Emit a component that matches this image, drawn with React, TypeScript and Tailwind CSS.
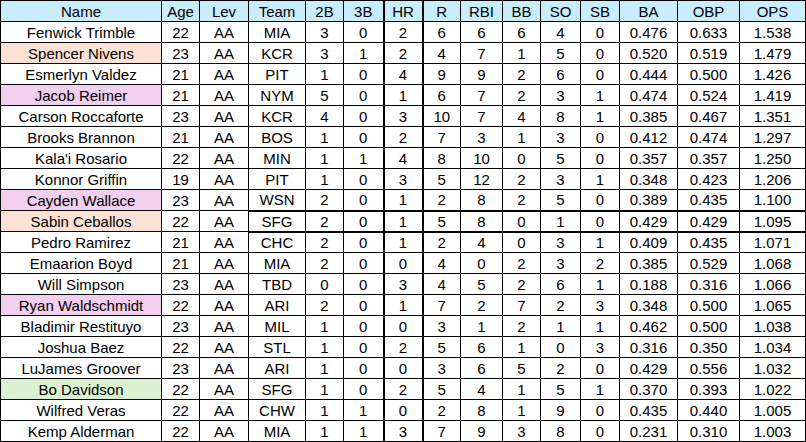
import React from "react";

type Row = [string, string, string, string, string, string, string, string, string, string, string, string, string, string, string, string];

const headers = ["Name", "Age", "Lev", "Team", "2B", "3B", "HR", "R", "RBI", "BB", "SO", "SB", "BA", "OBP", "OPS"];
const widths = [161, 38, 49, 57, 38, 40, 39, 38, 42, 38, 40, 39, 58, 62, 66];

const rows: Row[] = [
  ["Fenwick Trimble", "22", "AA", "MIA", "3", "0", "2", "6", "6", "6", "4", "0", "0.476", "0.633", "1.538", ""],
  ["Spencer Nivens", "23", "AA", "KCR", "3", "1", "2", "4", "7", "1", "5", "0", "0.520", "0.519", "1.479", "o"],
  ["Esmerlyn Valdez", "21", "AA", "PIT", "1", "0", "4", "9", "9", "2", "6", "0", "0.444", "0.500", "1.426", ""],
  ["Jacob Reimer", "21", "AA", "NYM", "5", "0", "1", "6", "7", "2", "3", "1", "0.474", "0.524", "1.419", "p"],
  ["Carson Roccaforte", "23", "AA", "KCR", "4", "0", "3", "10", "7", "4", "8", "1", "0.385", "0.467", "1.351", ""],
  ["Brooks Brannon", "21", "AA", "BOS", "1", "0", "2", "7", "3", "1", "3", "0", "0.412", "0.474", "1.297", ""],
  ["Kala'i Rosario", "22", "AA", "MIN", "1", "1", "4", "8", "10", "0", "5", "0", "0.357", "0.357", "1.250", ""],
  ["Konnor Griffin", "19", "AA", "PIT", "1", "0", "3", "5", "12", "2", "3", "1", "0.348", "0.423", "1.206", ""],
  ["Cayden Wallace", "23", "AA", "WSN", "2", "0", "1", "2", "8", "2", "5", "0", "0.389", "0.435", "1.100", "p"],
  ["Sabin Ceballos", "22", "AA", "SFG", "2", "0", "1", "5", "8", "0", "1", "0", "0.429", "0.429", "1.095", "o"],
  ["Pedro Ramirez", "21", "AA", "CHC", "2", "0", "1", "2", "4", "0", "3", "1", "0.409", "0.435", "1.071", ""],
  ["Emaarion Boyd", "21", "AA", "MIA", "2", "0", "0", "4", "0", "2", "3", "2", "0.385", "0.529", "1.068", ""],
  ["Will Simpson", "23", "AA", "TBD", "0", "0", "3", "4", "5", "2", "6", "1", "0.188", "0.316", "1.066", ""],
  ["Ryan Waldschmidt", "22", "AA", "ARI", "2", "0", "1", "7", "2", "7", "2", "3", "0.348", "0.500", "1.065", "p"],
  ["Bladimir Restituyo", "23", "AA", "MIL", "1", "0", "0", "3", "1", "2", "1", "1", "0.462", "0.500", "1.038", ""],
  ["Joshua Baez", "22", "AA", "STL", "1", "0", "2", "5", "6", "1", "0", "3", "0.316", "0.350", "1.034", ""],
  ["LuJames Groover", "23", "AA", "ARI", "1", "0", "0", "3", "6", "5", "2", "0", "0.429", "0.556", "1.032", ""],
  ["Bo Davidson", "22", "AA", "SFG", "1", "0", "2", "5", "4", "1", "5", "1", "0.370", "0.393", "1.022", "g"],
  ["Wilfred Veras", "22", "AA", "CHW", "1", "1", "0", "2", "8", "1", "9", "0", "0.435", "0.440", "1.005", ""],
  ["Kemp Alderman", "22", "AA", "MIA", "1", "1", "3", "7", "9", "3", "8", "0", "0.231", "0.310", "1.003", ""],
];

const hl: Record<string, string> = {
  "": "bg-white",
  o: "bg-[#fbe2d5]",
  p: "bg-[#f2ceef]",
  g: "bg-[#daf2d0]",
};

export default function App() {
  return (
    <div className="w-[806px] h-[442px] bg-white overflow-hidden">
      <table
        className="table-fixed border-collapse text-[15px] leading-none text-black"
        style={{ fontFamily: '"Liberation Sans", Arial, sans-serif' }}
      >
        <colgroup>
          {widths.map((w, i) => (
            <col key={i} style={{ width: w }} />
          ))}
        </colgroup>
        <thead>
          <tr className="h-[21px]">
            {headers.map((h, i) => (
              <th
                key={h}
                className={`bg-[#caedfb] font-normal text-center p-0 border border-black ${
                  i === 6 ? "border-x-2" : ""
                }`}
              >
                {h}
              </th>
            ))}
          </tr>
        </thead>
        <tbody>
          {rows.map((r, ri) => (
            <tr key={ri} className="h-[21px]">
              {r.slice(0, 15).map((c, ci) => (
                <td
                  key={ci}
                  className={`text-center p-0 border border-black ${
                    ci === 0 ? hl[r[15]] : "bg-white"
                  } ${ci === 6 ? "border-x-2" : ""} ${
                    ri === 9 && ci >= 3 ? "border-y-2" : ""
                  }`}
                >
                  {c}
                </td>
              ))}
            </tr>
          ))}
        </tbody>
      </table>
    </div>
  );
}
